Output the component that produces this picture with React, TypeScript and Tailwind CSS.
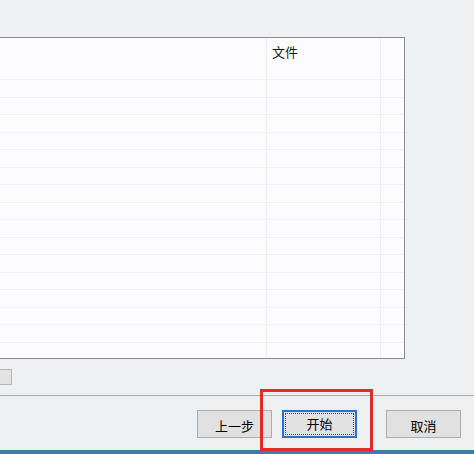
const rows = Array.from({ length: 16 })

const Btn = ({ label, focused }: { label: string; focused?: boolean }) => (
  <button
    className={
      focused
        ? "w-[75px] h-[28px] border-2 border-[#2a72d0] bg-[#e2e2e2] p-[1px]"
        : "w-[75px] h-[28px] border border-[#adadad] bg-[#e1e1e1]"
    }
  >
    {focused ? (
      <div className="w-full h-full border border-dotted border-[#3a4a6a] flex items-center justify-center text-[13px] text-black">
        {label}
      </div>
    ) : (
      <span className="text-[13px] text-black">{label}</span>
    )}
  </button>
)

export default function App() {
  return (
    <div
      className="w-[474px] h-[454px] bg-[#eff0f2] flex flex-col relative overflow-hidden"
      style={{ fontFamily: '"Microsoft YaHei", "Noto Sans CJK SC", sans-serif' }}
    >
      <div className="h-[37px] shrink-0" />
      <div className="w-[405px] h-[322px] shrink-0 border-t border-r border-b border-[#8c8c8c] bg-[#fcfcfe] flex overflow-hidden">
        <div className="w-[267px] shrink-0 flex flex-col border-r border-[#eeeef3]">
          <div className="h-[42px] shrink-0 border-b border-[#efeff4]" />
          {rows.map((_, i) => (
            <div key={i} className="h-[17.5px] shrink-0 border-b border-[#efeff4]" />
          ))}
        </div>
        <div className="w-[114px] shrink-0 flex flex-col border-r border-[#eeeef3]">
          <div className="h-[42px] shrink-0 border-b border-[#efeff4] pl-[5px] pt-[5px] text-[13px] leading-[18px] text-[#1a1a1a]">
            文件
          </div>
          {rows.map((_, i) => (
            <div key={i} className="h-[17.5px] shrink-0 border-b border-[#efeff4]" />
          ))}
        </div>
        <div className="flex-1 flex flex-col">
          <div className="h-[42px] shrink-0 border-b border-[#efeff4]" />
          {rows.map((_, i) => (
            <div key={i} className="h-[17.5px] shrink-0 border-b border-[#efeff4]" />
          ))}
        </div>
      </div>
      <div className="h-[10px] shrink-0" />
      <div className="w-[12px] h-[16px] shrink-0 border-t border-r border-b border-[#b5b5b5] bg-[#e3e3e3]" />
      <div className="h-[10px] shrink-0" />
      <div className="h-px shrink-0 bg-[#a8a8a8]" />
      <div className="flex-1 flex items-start pt-[14px] pl-[197px]">
        <Btn label="上一步" />
        <div className="w-[10px]" />
        <Btn label="开始" focused />
        <div className="w-[29px]" />
        <Btn label="取消" />
      </div>
      <div className="h-[4px] shrink-0 bg-[#3b7fa8]" />
      <div className="absolute left-[260px] top-[389px] w-[113px] h-[62px] border-[3px] border-[#e02a30]" />
    </div>
  )
}
